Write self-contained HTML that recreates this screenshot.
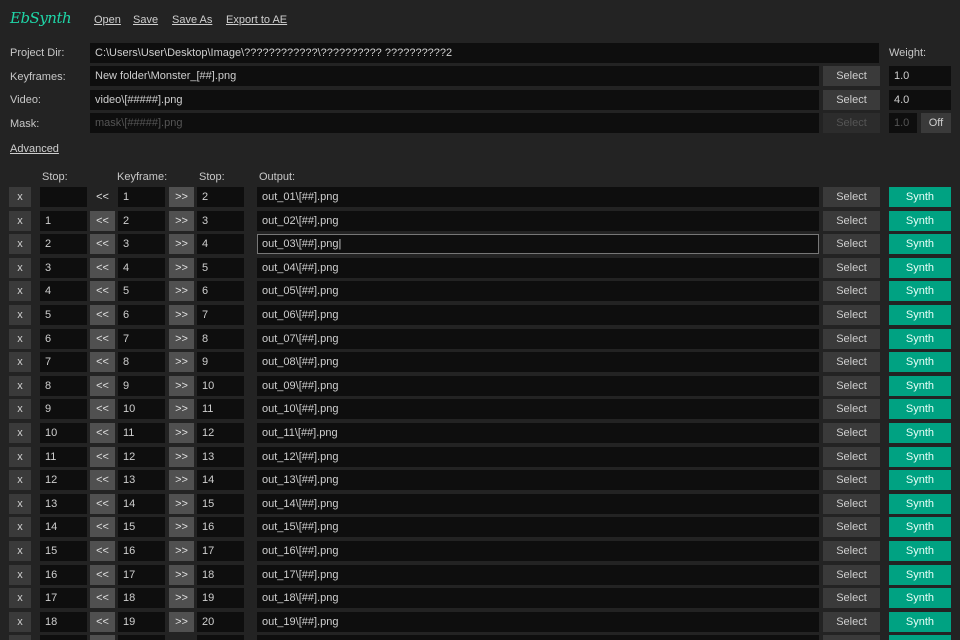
<!DOCTYPE html>
<html style="overflow:hidden;width:960px;height:640px"><head><meta charset="utf-8"><style>
*{margin:0;padding:0;box-sizing:border-box}
html,body{width:960px;height:640px;overflow:hidden}
body{background:#232323;font-family:"Liberation Sans","DejaVu Sans",sans-serif;font-size:11px;color:#cfcfcf;position:relative}
.a{position:absolute}
.in{position:absolute;background:#0e0e0e;height:20px;line-height:21px;padding-left:5px;white-space:nowrap;overflow:hidden}
.bt{position:absolute;background:#3a3a3a;height:20px;line-height:21px;text-align:center;color:#cfcfcf}
.ar{position:absolute;background:#505050;height:20px;line-height:21px;text-align:center;color:#e0e0e0;width:25px}
.sy{position:absolute;background:#00a282;height:20px;line-height:21px;text-align:center;color:#e8fff8;left:889px;width:62px}
.lb{position:absolute;color:#c8c8c8}
.m{position:absolute;top:14px;text-decoration:underline;color:#cfcfcf}
.r{position:absolute;left:0;width:960px;height:20px}
</style></head><body>
<div class="a" style="left:10px;top:9px;font-family:'DejaVu Serif',serif;font-style:italic;font-size:15px;color:#1fd6a8;letter-spacing:-0.5px">EbSynth</div>
<span class="m" style="left:94px">Open</span>
<span class="m" style="left:133px">Save</span>
<span class="m" style="left:172px">Save As</span>
<span class="m" style="left:226px">Export to AE</span>

<div class="lb" style="left:10px;top:47px">Project Dir:</div>
<div class="in" style="left:90px;top:43px;width:789px">C:\Users\User\Desktop\Image\????????????\?????????? ??????????2</div>
<div class="lb" style="left:889px;top:47px">Weight:</div>

<div class="lb" style="left:10px;top:71px">Keyframes:</div>
<div class="in" style="left:90px;top:66px;width:729px">New folder\Monster_[##].png</div>
<div class="bt" style="left:823px;top:66px;width:57px">Select</div>
<div class="in" style="left:889px;top:66px;width:62px">1.0</div>

<div class="lb" style="left:10px;top:94px">Video:</div>
<div class="in" style="left:90px;top:90px;width:729px">video\[#####].png</div>
<div class="bt" style="left:823px;top:90px;width:57px">Select</div>
<div class="in" style="left:889px;top:90px;width:62px">4.0</div>

<div class="lb" style="left:10px;top:118px">Mask:</div>
<div class="in" style="left:90px;top:113px;width:729px;color:#555">mask\[#####].png</div>
<div class="bt" style="left:823px;top:113px;width:57px;background:#2c2c2c;color:#555">Select</div>
<div class="in" style="left:889px;top:113px;width:28px;color:#555">1.0</div>
<div class="bt" style="left:921px;top:113px;width:30px">Off</div>

<div class="a" style="left:10px;top:143px;text-decoration:underline">Advanced</div>

<div class="lb" style="left:42px;top:171px">Stop:</div>
<div class="lb" style="left:117px;top:171px">Keyframe:</div>
<div class="lb" style="left:199px;top:171px">Stop:</div>
<div class="lb" style="left:259px;top:171px">Output:</div>

<div class="r" style="top:187px"><div class="bt" style="left:9px;width:22px">x</div><div class="in" style="left:40px;width:47px"></div><div class="ar" style="left:90px;background:transparent">&lt;&lt;</div><div class="in" style="left:118px;width:47px">1</div><div class="ar" style="left:169px">&gt;&gt;</div><div class="in" style="left:197px;width:47px">2</div><div class="in" style="left:257px;width:562px">out_01\[##].png</div><div class="bt" style="left:823px;width:57px">Select</div><div class="sy">Synth</div></div>
<div class="r" style="top:211px"><div class="bt" style="left:9px;width:22px">x</div><div class="in" style="left:40px;width:47px">1</div><div class="ar" style="left:90px">&lt;&lt;</div><div class="in" style="left:118px;width:47px">2</div><div class="ar" style="left:169px">&gt;&gt;</div><div class="in" style="left:197px;width:47px">3</div><div class="in" style="left:257px;width:562px">out_02\[##].png</div><div class="bt" style="left:823px;width:57px">Select</div><div class="sy">Synth</div></div>
<div class="r" style="top:234px"><div class="bt" style="left:9px;width:22px">x</div><div class="in" style="left:40px;width:47px">2</div><div class="ar" style="left:90px">&lt;&lt;</div><div class="in" style="left:118px;width:47px">3</div><div class="ar" style="left:169px">&gt;&gt;</div><div class="in" style="left:197px;width:47px">4</div><div class="in" style="left:257px;width:562px;border:1px solid #777;line-height:19px;padding-left:4px">out_03\[##].png|</div><div class="bt" style="left:823px;width:57px">Select</div><div class="sy">Synth</div></div>
<div class="r" style="top:258px"><div class="bt" style="left:9px;width:22px">x</div><div class="in" style="left:40px;width:47px">3</div><div class="ar" style="left:90px">&lt;&lt;</div><div class="in" style="left:118px;width:47px">4</div><div class="ar" style="left:169px">&gt;&gt;</div><div class="in" style="left:197px;width:47px">5</div><div class="in" style="left:257px;width:562px">out_04\[##].png</div><div class="bt" style="left:823px;width:57px">Select</div><div class="sy">Synth</div></div>
<div class="r" style="top:281px"><div class="bt" style="left:9px;width:22px">x</div><div class="in" style="left:40px;width:47px">4</div><div class="ar" style="left:90px">&lt;&lt;</div><div class="in" style="left:118px;width:47px">5</div><div class="ar" style="left:169px">&gt;&gt;</div><div class="in" style="left:197px;width:47px">6</div><div class="in" style="left:257px;width:562px">out_05\[##].png</div><div class="bt" style="left:823px;width:57px">Select</div><div class="sy">Synth</div></div>
<div class="r" style="top:305px"><div class="bt" style="left:9px;width:22px">x</div><div class="in" style="left:40px;width:47px">5</div><div class="ar" style="left:90px">&lt;&lt;</div><div class="in" style="left:118px;width:47px">6</div><div class="ar" style="left:169px">&gt;&gt;</div><div class="in" style="left:197px;width:47px">7</div><div class="in" style="left:257px;width:562px">out_06\[##].png</div><div class="bt" style="left:823px;width:57px">Select</div><div class="sy">Synth</div></div>
<div class="r" style="top:329px"><div class="bt" style="left:9px;width:22px">x</div><div class="in" style="left:40px;width:47px">6</div><div class="ar" style="left:90px">&lt;&lt;</div><div class="in" style="left:118px;width:47px">7</div><div class="ar" style="left:169px">&gt;&gt;</div><div class="in" style="left:197px;width:47px">8</div><div class="in" style="left:257px;width:562px">out_07\[##].png</div><div class="bt" style="left:823px;width:57px">Select</div><div class="sy">Synth</div></div>
<div class="r" style="top:352px"><div class="bt" style="left:9px;width:22px">x</div><div class="in" style="left:40px;width:47px">7</div><div class="ar" style="left:90px">&lt;&lt;</div><div class="in" style="left:118px;width:47px">8</div><div class="ar" style="left:169px">&gt;&gt;</div><div class="in" style="left:197px;width:47px">9</div><div class="in" style="left:257px;width:562px">out_08\[##].png</div><div class="bt" style="left:823px;width:57px">Select</div><div class="sy">Synth</div></div>
<div class="r" style="top:376px"><div class="bt" style="left:9px;width:22px">x</div><div class="in" style="left:40px;width:47px">8</div><div class="ar" style="left:90px">&lt;&lt;</div><div class="in" style="left:118px;width:47px">9</div><div class="ar" style="left:169px">&gt;&gt;</div><div class="in" style="left:197px;width:47px">10</div><div class="in" style="left:257px;width:562px">out_09\[##].png</div><div class="bt" style="left:823px;width:57px">Select</div><div class="sy">Synth</div></div>
<div class="r" style="top:399px"><div class="bt" style="left:9px;width:22px">x</div><div class="in" style="left:40px;width:47px">9</div><div class="ar" style="left:90px">&lt;&lt;</div><div class="in" style="left:118px;width:47px">10</div><div class="ar" style="left:169px">&gt;&gt;</div><div class="in" style="left:197px;width:47px">11</div><div class="in" style="left:257px;width:562px">out_10\[##].png</div><div class="bt" style="left:823px;width:57px">Select</div><div class="sy">Synth</div></div>
<div class="r" style="top:423px"><div class="bt" style="left:9px;width:22px">x</div><div class="in" style="left:40px;width:47px">10</div><div class="ar" style="left:90px">&lt;&lt;</div><div class="in" style="left:118px;width:47px">11</div><div class="ar" style="left:169px">&gt;&gt;</div><div class="in" style="left:197px;width:47px">12</div><div class="in" style="left:257px;width:562px">out_11\[##].png</div><div class="bt" style="left:823px;width:57px">Select</div><div class="sy">Synth</div></div>
<div class="r" style="top:447px"><div class="bt" style="left:9px;width:22px">x</div><div class="in" style="left:40px;width:47px">11</div><div class="ar" style="left:90px">&lt;&lt;</div><div class="in" style="left:118px;width:47px">12</div><div class="ar" style="left:169px">&gt;&gt;</div><div class="in" style="left:197px;width:47px">13</div><div class="in" style="left:257px;width:562px">out_12\[##].png</div><div class="bt" style="left:823px;width:57px">Select</div><div class="sy">Synth</div></div>
<div class="r" style="top:470px"><div class="bt" style="left:9px;width:22px">x</div><div class="in" style="left:40px;width:47px">12</div><div class="ar" style="left:90px">&lt;&lt;</div><div class="in" style="left:118px;width:47px">13</div><div class="ar" style="left:169px">&gt;&gt;</div><div class="in" style="left:197px;width:47px">14</div><div class="in" style="left:257px;width:562px">out_13\[##].png</div><div class="bt" style="left:823px;width:57px">Select</div><div class="sy">Synth</div></div>
<div class="r" style="top:494px"><div class="bt" style="left:9px;width:22px">x</div><div class="in" style="left:40px;width:47px">13</div><div class="ar" style="left:90px">&lt;&lt;</div><div class="in" style="left:118px;width:47px">14</div><div class="ar" style="left:169px">&gt;&gt;</div><div class="in" style="left:197px;width:47px">15</div><div class="in" style="left:257px;width:562px">out_14\[##].png</div><div class="bt" style="left:823px;width:57px">Select</div><div class="sy">Synth</div></div>
<div class="r" style="top:517px"><div class="bt" style="left:9px;width:22px">x</div><div class="in" style="left:40px;width:47px">14</div><div class="ar" style="left:90px">&lt;&lt;</div><div class="in" style="left:118px;width:47px">15</div><div class="ar" style="left:169px">&gt;&gt;</div><div class="in" style="left:197px;width:47px">16</div><div class="in" style="left:257px;width:562px">out_15\[##].png</div><div class="bt" style="left:823px;width:57px">Select</div><div class="sy">Synth</div></div>
<div class="r" style="top:541px"><div class="bt" style="left:9px;width:22px">x</div><div class="in" style="left:40px;width:47px">15</div><div class="ar" style="left:90px">&lt;&lt;</div><div class="in" style="left:118px;width:47px">16</div><div class="ar" style="left:169px">&gt;&gt;</div><div class="in" style="left:197px;width:47px">17</div><div class="in" style="left:257px;width:562px">out_16\[##].png</div><div class="bt" style="left:823px;width:57px">Select</div><div class="sy">Synth</div></div>
<div class="r" style="top:565px"><div class="bt" style="left:9px;width:22px">x</div><div class="in" style="left:40px;width:47px">16</div><div class="ar" style="left:90px">&lt;&lt;</div><div class="in" style="left:118px;width:47px">17</div><div class="ar" style="left:169px">&gt;&gt;</div><div class="in" style="left:197px;width:47px">18</div><div class="in" style="left:257px;width:562px">out_17\[##].png</div><div class="bt" style="left:823px;width:57px">Select</div><div class="sy">Synth</div></div>
<div class="r" style="top:588px"><div class="bt" style="left:9px;width:22px">x</div><div class="in" style="left:40px;width:47px">17</div><div class="ar" style="left:90px">&lt;&lt;</div><div class="in" style="left:118px;width:47px">18</div><div class="ar" style="left:169px">&gt;&gt;</div><div class="in" style="left:197px;width:47px">19</div><div class="in" style="left:257px;width:562px">out_18\[##].png</div><div class="bt" style="left:823px;width:57px">Select</div><div class="sy">Synth</div></div>
<div class="r" style="top:612px"><div class="bt" style="left:9px;width:22px">x</div><div class="in" style="left:40px;width:47px">18</div><div class="ar" style="left:90px">&lt;&lt;</div><div class="in" style="left:118px;width:47px">19</div><div class="ar" style="left:169px">&gt;&gt;</div><div class="in" style="left:197px;width:47px">20</div><div class="in" style="left:257px;width:562px">out_19\[##].png</div><div class="bt" style="left:823px;width:57px">Select</div><div class="sy">Synth</div></div>
<div class="r" style="top:635px;height:5px;overflow:hidden"><div class="bt" style="left:9px;width:22px"></div><div class="in" style="left:40px;width:47px"></div><div class="ar" style="left:90px"></div><div class="in" style="left:118px;width:47px"></div><div class="in" style="left:197px;width:47px"></div><div class="in" style="left:257px;width:562px"></div><div class="bt" style="left:823px;width:57px"></div><div class="sy"></div></div>
</body></html>
